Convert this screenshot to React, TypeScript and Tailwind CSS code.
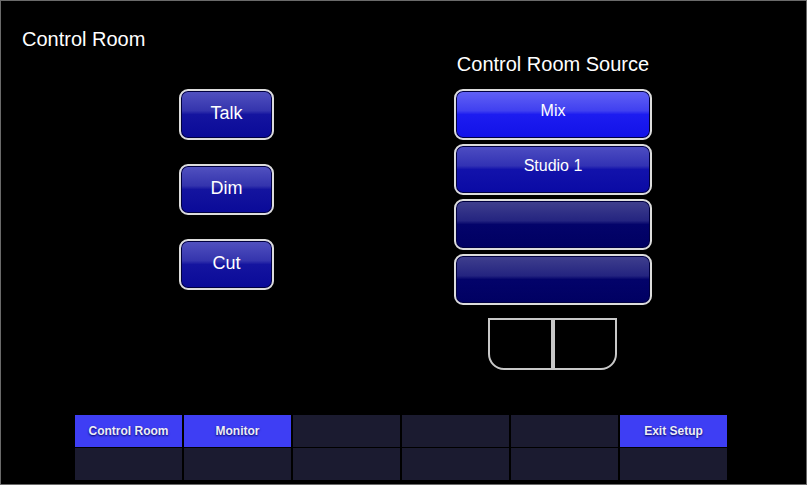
import React from "react";

const glossTalk =
  "bg-[linear-gradient(to_bottom,#5252c0_0%,#3434ad_42%,#14149f_50%,#0a0a98_100%)]";
const glossMix =
  "bg-[linear-gradient(to_bottom,#6262f5_0%,#4040f0_42%,#1c1cf0_50%,#1212e8_100%)]";
const glossStudio =
  "bg-[linear-gradient(to_bottom,#4e4ec2_0%,#3232b4_42%,#1212ab_50%,#0a0aa4_100%)]";
const glossEmpty =
  "bg-[linear-gradient(to_bottom,#40408e_0%,#242480_42%,#03036a_50%,#000062_100%)]";

function GlossButton({
  label,
  gloss,
  className,
  textClass,
}: {
  label: string;
  gloss: string;
  className: string;
  textClass: string;
}) {
  return (
    <div
      className={`${className} ${gloss} rounded-[9px] border-2 border-[#dcdcdc] shadow-[inset_0_0_0_1px_#000040] flex items-center justify-center text-white ${textClass}`}
    >
      {label}
    </div>
  );
}

const tabs = ["Control Room", "Monitor", "", "", "", "Exit Setup"];

export default function App() {
  return (
    <div
      className="w-[807px] h-[485px] bg-black border border-[#6a6a6a] flex flex-col text-white overflow-hidden"
      style={{ fontFamily: '"Liberation Sans", Arial, sans-serif' }}
    >
      <div className="h-[51px] pt-[26px] pl-[21px] text-[20px] leading-[24px]">
        Control Room
      </div>
      <div className="flex pl-[178px]">
        <div className="w-[95px] pt-[37px] flex flex-col gap-[24px]">
          <GlossButton label="Talk" gloss={glossTalk} className="h-[51px] pb-[2px]" textClass="text-[18px]" />
          <GlossButton label="Dim" gloss={glossTalk} className="h-[51px] pb-[2px]" textClass="text-[18px]" />
          <GlossButton label="Cut" gloss={glossTalk} className="h-[51px] pb-[2px]" textClass="text-[18px]" />
        </div>
        <div className="ml-[180px] w-[198px] flex flex-col">
          <div className="h-[37px] text-center text-[20px] leading-[24px]">
            Control Room Source
          </div>
          <div className="flex flex-col gap-[4px]">
            <GlossButton label="Mix" gloss={glossMix} className="h-[51px] pb-[7px]" textClass="text-[16px]" />
            <GlossButton label="Studio 1" gloss={glossStudio} className="h-[51px] pb-[7px]" textClass="text-[16px]" />
            <GlossButton label="" gloss={glossEmpty} className="h-[51px]" textClass="text-[16px]" />
            <GlossButton label="" gloss={glossEmpty} className="h-[51px]" textClass="text-[16px]" />
          </div>
          <div className="mt-[13px] ml-[34px] flex">
            <div className="w-[65px] h-[52px] border-2 border-[#c8c8c8] rounded-bl-[16px]" />
            <div className="w-[64px] h-[52px] border-2 border-[#c8c8c8] rounded-br-[16px]" />
          </div>
        </div>
      </div>
      <div className="mt-auto mb-[4px] ml-[74px] grid grid-cols-[repeat(6,107px)] grid-rows-[32px_32px] gap-x-[2px] gap-y-[1px]">
        {tabs.map((t, i) => (
          <div
            key={`t${i}`}
            className={`${t ? "bg-[#3e3ef4]" : "bg-[#1b1b30]"} flex items-center justify-center text-[12px] font-bold text-[#eeeef6] [text-shadow:0_1px_2px_#000060]`}
          >
            {t}
          </div>
        ))}
        {tabs.map((_, i) => (
          <div key={`b${i}`} className="bg-[#1b1b30]" />
        ))}
      </div>
    </div>
  );
}
